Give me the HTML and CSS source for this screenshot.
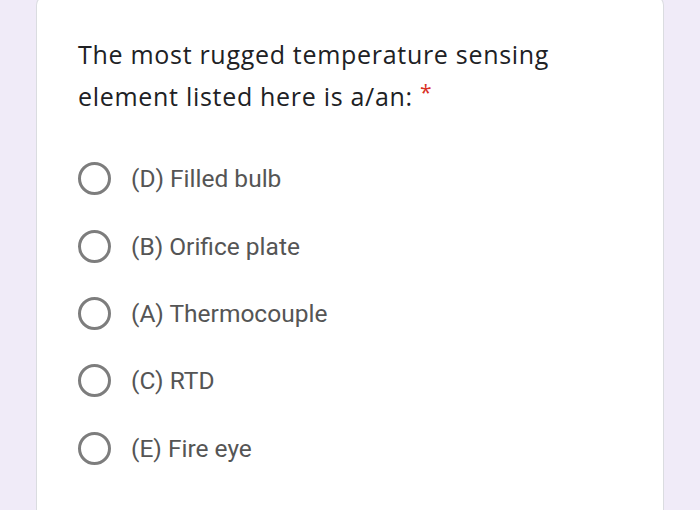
FILE: index.html
```html
<!DOCTYPE html>
<html lang="en">
<head>
<meta charset="utf-8">
<title>Question</title>
<link rel="stylesheet" href="styles.css">
</head>
<body>
<main class="page">
  <section class="card">
    <h1 class="question">The most rugged temperature sensing element listed here is a/an:<span class="req">*</span></h1>
    <ul class="options">
      <li class="option"><span class="radio"></span><span class="label">(D) Filled bulb</span></li>
      <li class="option"><span class="radio"></span><span class="label">(B) Orifice plate</span></li>
      <li class="option"><span class="radio"></span><span class="label">(A) Thermocouple</span></li>
      <li class="option"><span class="radio"></span><span class="label">(C) RTD</span></li>
      <li class="option"><span class="radio"></span><span class="label">(E) Fire eye</span></li>
    </ul>
  </section>
</main>
</body>
</html>
```

FILE: styles.css
```css
html, body {
  margin: 0;
  padding: 0;
  background: #f0ebf8;
  height: 100%;
  overflow: hidden;
}

.page {
  padding-left: 36px;
}

.card {
  width: 628px;
  height: 514px;
  box-sizing: border-box;
  margin-top: -4px;
  background: #ffffff;
  border: 1px solid #dadce0;
  border-bottom: none;
  border-radius: 9px 9px 0 0;
  padding: 36px 41px 0 41px;
}

.question {
  margin: 0;
  max-width: 520px;
  font-family: "Open Sans", "Liberation Sans", sans-serif;
  font-weight: 400;
  font-size: 25px;
  letter-spacing: 0.7px;
  line-height: 42px;
  color: #202124;
}

.req {
  display: inline-block;
  margin-left: 7px;
  color: #d93025;
  font-size: 21px;
  line-height: 1;
  vertical-align: 6px;
}

.options {
  list-style: none;
  margin: 28px 0 0 0;
  padding: 0;
  display: flex;
  flex-direction: column;
}

.option {
  height: 67.4px;
  display: flex;
  align-items: center;
  gap: 20px;
}

.radio {
  width: 33px;
  height: 33px;
  box-sizing: border-box;
  border: 3px solid #7d7d7d;
  border-radius: 50%;
  flex: none;
}

.label {
  font-family: "Roboto", "Liberation Sans", sans-serif;
  font-size: 24.5px;
  color: #555555;
}
```
